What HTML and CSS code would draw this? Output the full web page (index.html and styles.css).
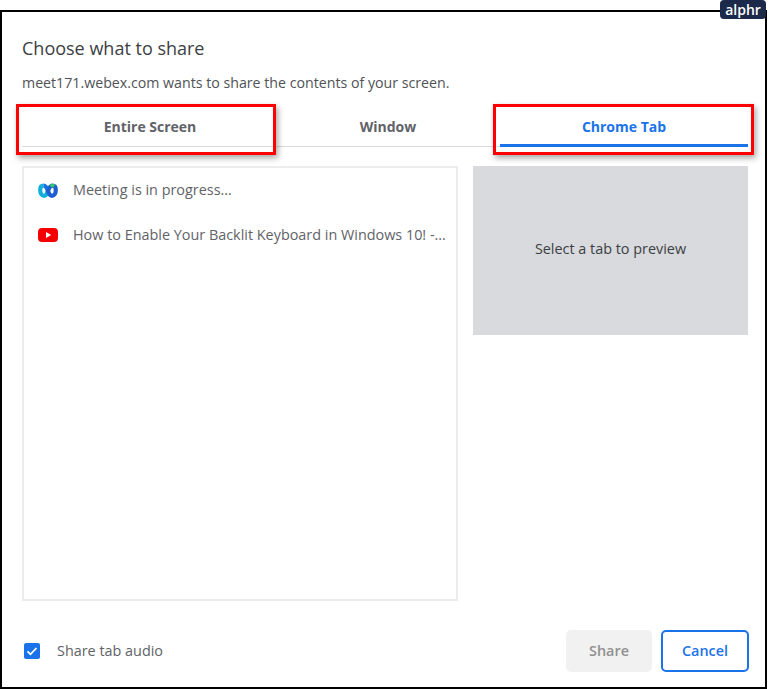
FILE: index.html
```html
<!DOCTYPE html>
<html lang="en">
<head>
<meta charset="utf-8">
<title>Choose what to share</title>
<link rel="stylesheet" href="styles.css">
</head>
<body>
<div class="frame">
  <h1 class="title">Choose what to share</h1>
  <p class="subtitle">meet171.webex.com wants to share the contents of your screen.</p>
  <div class="tabs">
    <div class="tab">Entire Screen</div>
    <div class="tab">Window</div>
    <div class="tab tab-active">Chrome Tab</div>
  </div>
  <div class="content">
    <div class="list">
      <div class="row">
        <svg class="row-icon" width="20" height="16" viewBox="0 0 20 16">
          <path d="M5.500 2.700C3 2.700 2.200 4.700 2.200 7c0 3 1.300 5.800 3.800 5.800 2 0 3-2 4-4.800" fill="none" stroke="#10b0dc" stroke-width="4.200"/>
          <path d="M5.500 2.700C8 2.700 9 5 10 8" fill="none" stroke="#1670e0" stroke-width="4.200"/>
          <path d="M14.500 2.700C12 2.700 11 5 10 8c1 2.800 2 4.800 4 4.800 2.500 0 3.800-2.800 3.800-5.800 0-2.300-.8-4.300-3.300-4.300z" fill="none" stroke="#1d5fd0" stroke-width="4.200"/>
          <path d="M12.500 3.200c1-.8 2.500-1 3.800-.2" fill="none" stroke="#35c46a" stroke-width="3.400"/>
        </svg>
        <span class="row-text">Meeting is in progress...</span>
      </div>
      <div class="row">
        <svg class="row-icon" width="20" height="16" viewBox="0 0 20 16">
          <rect x="0" y="0" width="20" height="14" rx="4" fill="#f40000"/>
          <path d="M8 4l5.200 3L8 10z" fill="#fff"/>
        </svg>
        <span class="row-text">How to Enable Your Backlit Keyboard in Windows 10! -...</span>
      </div>
    </div>
    <div class="preview">Select a tab to preview</div>
  </div>
  <div class="footer">
    <label class="audio">
      <svg class="check" width="16" height="16" viewBox="0 0 16 16">
        <rect width="16" height="16" rx="2" fill="#1a73e8"/>
        <path d="M3.500 8.300l3 3 6-6.300" fill="none" stroke="#fff" stroke-width="1.800"/>
      </svg>
      <span class="audio-text">Share tab audio</span>
    </label>
    <div class="buttons">
      <button class="btn btn-share" type="button">Share</button>
      <button class="btn btn-cancel" type="button">Cancel</button>
    </div>
  </div>
  <div class="mark mark-left"></div>
  <div class="mark mark-right"></div>
</div>
<div class="badge">alphr</div>
</body>
</html>
```

FILE: styles.css
```css
* { box-sizing: border-box; }
html, body { margin: 0; padding: 0; background: #fff; }
body { height: 689px; overflow: hidden; padding-top: 10px; font-family: "Open Sans", "Noto Sans", sans-serif; color: #5f6368; }
.frame { position: relative; width: 767px; height: 679px; border: 2px solid #000; padding: 0 17px 0 20px; }
.title { margin: 24px 0 0; font-size: 18px; line-height: 24px; font-weight: 400; color: #3c4043; }
.subtitle { margin: 13px 0 0; font-size: 14.2px; line-height: 20px; color: #4f5256; }
.tabs { display: grid; grid-template-columns: 256px 220px 250px; height: 39px; margin-top: 15px; border-bottom: 1px solid #dadce0; }
.tab { display: flex; align-items: center; justify-content: center; padding-bottom: 2px; font-size: 14px; font-weight: 700; color: #5f6368; }
.tab-active { margin-left: 2px; height: 39px; color: #1a73e8; border-bottom: 3px solid #1a73e8; padding-bottom: 0; }
.content { display: flex; gap: 15px; margin-top: 19px; align-items: flex-start; }
.list { width: 436px; height: 435px; border: 2px solid #ececef; }
.row { display: flex; align-items: center; height: 45px; padding-left: 14px; font-size: 14.4px; color: #5f6368; }
.row-icon { flex: none; margin-right: 15px; }
.row-text { white-space: nowrap; margin-bottom: 2px; }
.preview { width: 275px; height: 169px; display: flex; align-items: center; justify-content: center; padding-bottom: 4px; background: #d9dade; font-size: 14.4px; color: #3c4043; }
.footer { display: flex; justify-content: space-between; align-items: center; margin-top: 29px; height: 42px; }
.audio { display: flex; align-items: center; padding-left: 2px; font-size: 14.4px; color: #5f6368; }
.audio-text { margin-bottom: 2px; }
.check { margin-right: 17px; }
.buttons { display: flex; gap: 9px; margin-right: -1px; }
.btn { height: 42px; border-radius: 5px; font-family: inherit; font-size: 14.4px; font-weight: 600; background: #fff; padding: 0 0 2px; }
.btn-share { width: 86px; border: 0; background: #f1f1f1; color: #909090; }
.btn-cancel { width: 88px; border: 2px solid #1a73e8; color: #1a73e8; }
.mark { position: absolute; top: 92px; height: 51px; border: 3px solid #f00; box-shadow: 2px 3px 6px rgba(0,0,0,.35); }
.mark-left { left: 14px; width: 260px; }
.mark-right { left: 491px; width: 261px; }
.badge { position: absolute; top: 0; left: 720px; width: 46px; height: 19px; display: flex; align-items: center; justify-content: center; background: #1b2a4a; border-radius: 4px; color: #fff; font-size: 14px; font-weight: 600; line-height: 1; }
```
